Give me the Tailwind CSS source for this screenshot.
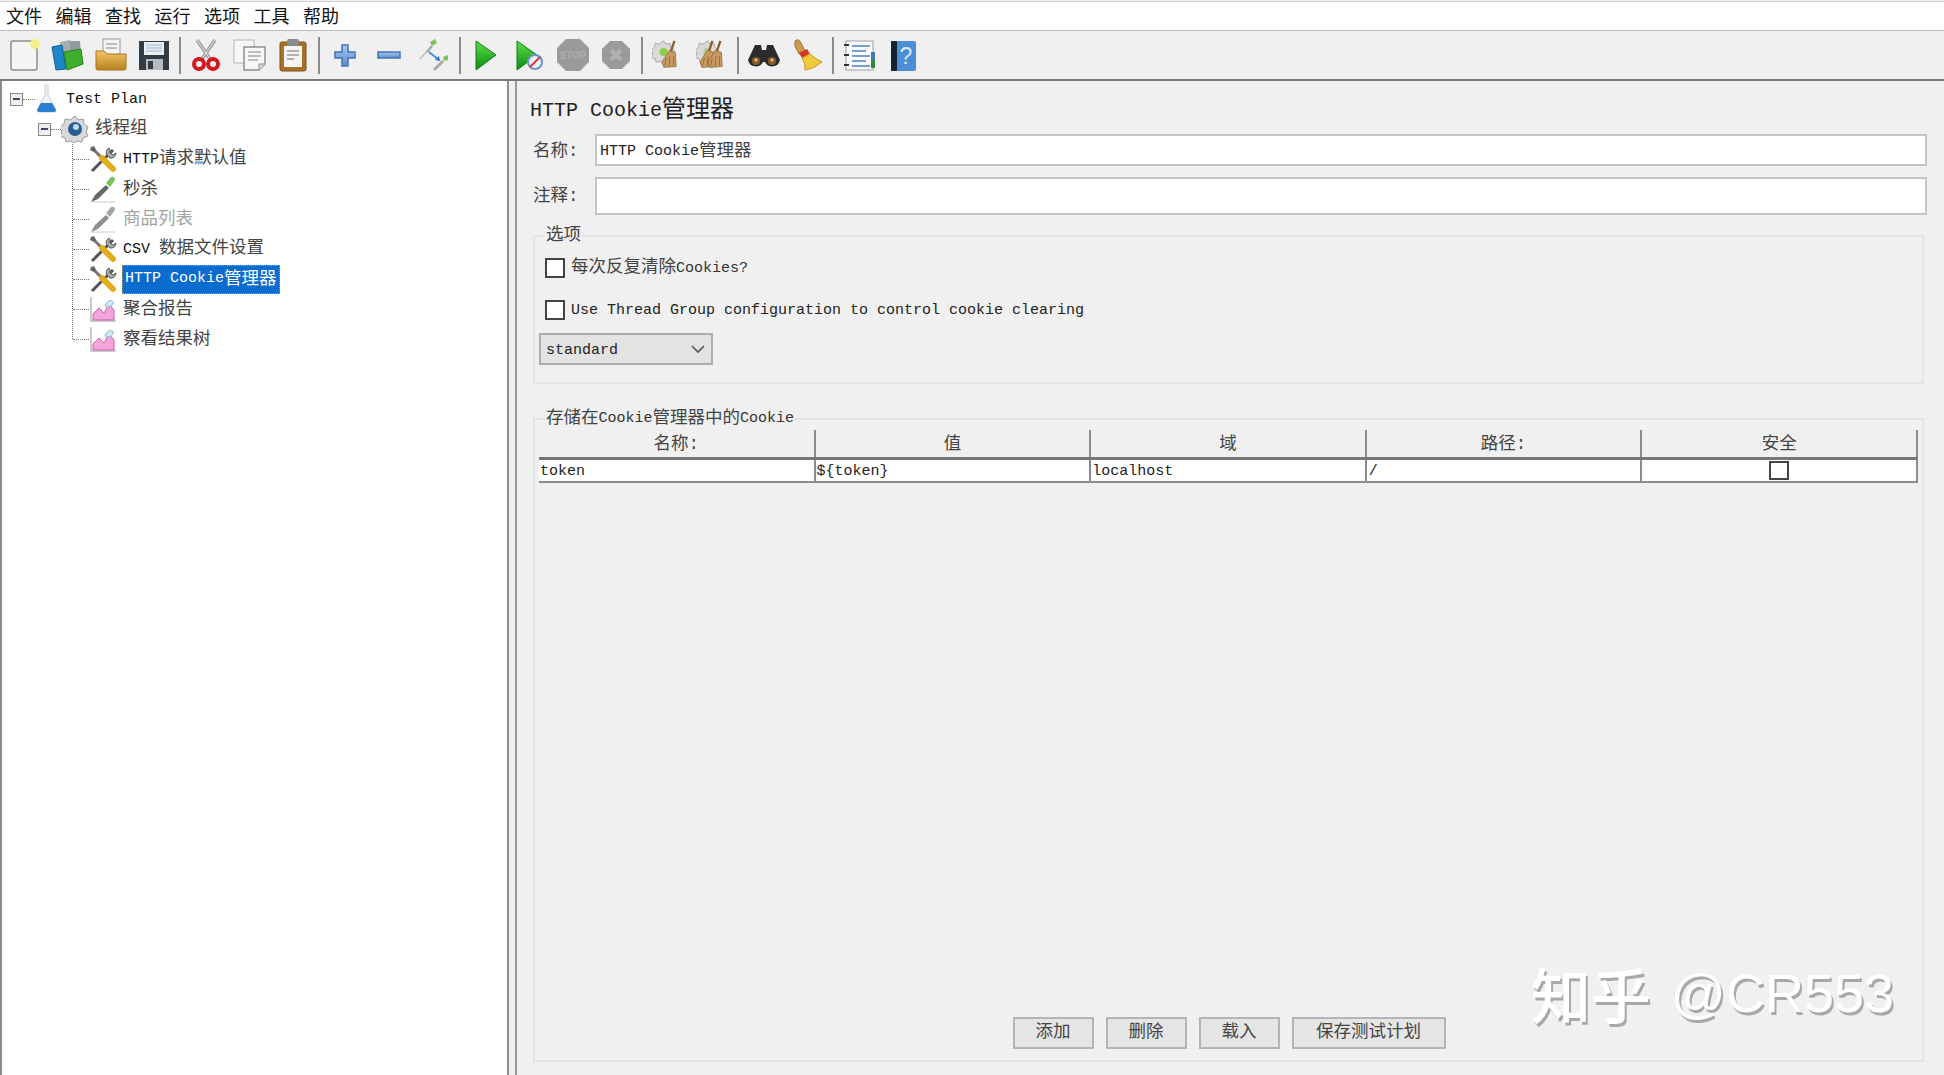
<!DOCTYPE html>
<html lang="zh-CN">
<head>
  <meta charset="UTF-8" />
  <title>Apache JMeter - HTTP Cookie管理器</title>
  <script src="https://cdn.jsdelivr.net/npm/@tailwindcss/browser@4"></script>
</head>
<body class="w-[1944px] h-[1075px] overflow-hidden flex flex-col bg-[#f0f0f0] text-[15px] text-[#222] [font-family:'Liberation_Mono','Noto_Sans_CJK_SC',monospace]">
  <!-- shared icons -->
  <svg class="absolute w-0 h-0">
    <defs>
      <linearGradient id="g-green" x1="0" y1="0" x2="0" y2="1"><stop offset="0" stop-color="#5fe04a"/><stop offset="1" stop-color="#0b8a12"/></linearGradient>
      <linearGradient id="g-folder" x1="0" y1="0" x2="0" y2="1"><stop offset="0" stop-color="#f2c766"/><stop offset="1" stop-color="#b97f1e"/></linearGradient>
      <linearGradient id="g-blue" x1="0" y1="0" x2="0" y2="1"><stop offset="0" stop-color="#a9c8ee"/><stop offset="1" stop-color="#5a8ccb"/></linearGradient>
    </defs>
    <symbol id="i-tools" viewBox="0 0 28 28">
      <path d="M3 26 L24 5" stroke="#555" stroke-width="3"/>
      <path d="M20 3 a5 5 0 0 0 -2 7 l3 3 a5 5 0 0 0 6 -5 l-3 2 -3 -2 0 -3z" fill="#aaa" stroke="#555"/>
      <path d="M4 4 L14 14" stroke="#777" stroke-width="3"/>
      <path d="M2 2 L5 1 L7 5 L5 7 L1 5z" fill="#666"/>
      <path d="M13 13 L24 24" stroke="#e3ac1c" stroke-width="6" stroke-linecap="round"/>
    </symbol>
    <symbol id="i-chart" viewBox="0 0 28 28">
      <path d="M2 2 V26 H27" fill="none" stroke="#bfb8bf" stroke-width="1.5"/>
      <path d="M4 25 V19 L10 13 L15 18 L20 9 L25 15 V25z" fill="#f3a4dc" stroke="#c964a8"/>
      <path d="M16 11 C18 5 23 4 24 7 C25 10 20 14 16 11z" fill="#cfe6f4" stroke="#8eb6d3"/>
    </symbol>
    <symbol id="i-broom" viewBox="0 0 34 34">
      <path d="M22 1 L18 13" stroke="#8a5a2b" stroke-width="2.5"/>
      <path d="M16 12 L23 14 L24 30 L10 31 L8 25z" fill="#c89b63" stroke="#96703e"/>
      <path d="M13 20 L11 29 M17 18 L16 30 M21 18 L21 29" stroke="#8f6a38"/>
    </symbol>
    <symbol id="i-gear" viewBox="0 0 28 28">
      <path d="M14 1 l3 4 5 -1 1 5 4 3 -2 5 2 4 -5 2 -1 4 -5 -1 -3 2 -3 -2 -5 1 -1 -4 -5 -2 2 -4 -2 -5 4 -3 1 -5 5 1z" fill="#d9d9d9" stroke="#9b9b9b"/>
    </symbol>
  </svg>

  <!-- menu bar -->
  <nav class="h-[30px] shrink-0 bg-white border-t border-t-[#d0d0d0] mt-px border-b border-b-[#bdbdbd] flex items-center gap-[13.5px] pl-[6px] pb-[3px] text-[18px] leading-none text-[#111] [font-family:'Noto_Sans_CJK_SC',sans-serif]">
    <span>文件</span><span>编辑</span><span>查找</span><span>运行</span><span>选项</span><span>工具</span><span>帮助</span>
  </nav>

  <!-- toolbar -->
  <div class="h-[50px] shrink-0 flex items-center pl-[2px] border-b-2 border-[#7a7a7a] bg-[#f0f0f0]">
    <svg class="w-[34px] h-[34px] mx-[4.75px]" viewBox="0 0 34 34"><rect x="4" y="3" width="26" height="29" rx="2" fill="#f4f4f2" stroke="#8d8d8d" stroke-width="1.5"/><circle cx="28" cy="6" r="5" fill="#f7ee8c"/><path d="M6 12v.1M6 20v.1M6 27v.1" stroke="#aaa" stroke-width="1.5"/></svg>
    <svg class="w-[34px] h-[34px] mx-[4.75px]" viewBox="0 0 34 34"><path d="M10 4 L20 2 L22 24 L12 26z" fill="#a6aeb0"/><path d="M20 3 L30 3 L31 22 L20 24z" fill="#8f9ba0"/><path d="M2 9 L12 7 L16 31 L6 32z" fill="#1e86c8" stroke="#0f5f94"/><path d="M14 14 L31 11 L33 26 L17 32z" fill="#3fae2c" stroke="#27801b"/></svg>
    <svg class="w-[34px] h-[34px] mx-[4.75px]" viewBox="0 0 34 34"><rect x="9" y="1" width="17" height="17" fill="#f4f4f4" stroke="#999"/><path d="M12 6h11M12 10h11" stroke="#aaa" stroke-width="1.5"/><path d="M2 13 H10 L13 16 H32 V30 Q32 32 30 32 H4 Q2 32 2 30z" fill="url(#g-folder)" stroke="#a9751f"/></svg>
    <svg class="w-[34px] h-[34px] mx-[4.75px]" viewBox="0 0 34 34"><path d="M2 3 H32 V32 H2z" fill="#333c42"/><rect x="7" y="4" width="20" height="13" fill="#e8eef4"/><path d="M9 7h16M9 10h16M9 13h16" stroke="#9db4cb"/><rect x="9" y="21" width="17" height="11" fill="#b9bcbf"/><rect x="11" y="23" width="5" height="8" fill="#333c42"/></svg>
    <div class="w-[2px] h-[37px] mx-[3.25px] bg-[#8c8c8c]"></div>
    <svg class="w-[34px] h-[34px] mx-[4.75px]" viewBox="0 0 34 34"><path d="M8 2 L21 21 M26 2 L13 21" stroke="#9d9d9d" stroke-width="3.5"/><path d="M8 2 L21 21 M26 2 L13 21" stroke="#e8e8e8" stroke-width="1"/><circle cx="10" cy="26" r="5" fill="none" stroke="#d3171b" stroke-width="4"/><circle cx="24" cy="26" r="5" fill="none" stroke="#d3171b" stroke-width="4"/></svg>
    <svg class="w-[34px] h-[34px] mx-[4.75px]" viewBox="0 0 34 34"><rect x="1" y="2" width="20" height="23" fill="#f6f6f6" stroke="#b5b5b5"/><path d="M11 9 H32 V26 L26 32 H11z" fill="#f6f6f6" stroke="#8f8f8f" stroke-width="1.5"/><path d="M15 14h13M15 18h13M15 22h10" stroke="#aaa" stroke-width="1.5"/><path d="M26 32 V26 H32" fill="#ddd" stroke="#8f8f8f"/></svg>
    <svg class="w-[34px] h-[34px] mx-[4.75px]" viewBox="0 0 34 34"><rect x="4" y="4" width="26" height="29" rx="2" fill="#a8712a" stroke="#7e5218"/><rect x="8" y="8" width="18" height="21" fill="#f5f5f3"/><path d="M11 13h12M11 17h12M11 21h7" stroke="#999" stroke-width="1.5"/><rect x="11" y="1" width="12" height="7" rx="2" fill="#8b8b8b"/></svg>
    <div class="w-[2px] h-[37px] mx-[3.25px] bg-[#8c8c8c]"></div>
    <svg class="w-[34px] h-[34px] mx-[4.75px]" viewBox="0 0 34 34"><path d="M14 7 H20 V14 H27 V20 H20 V28 H14 V20 H7 V14 H14z" fill="url(#g-blue)" stroke="#3f74b5" stroke-width="1.5"/></svg>
    <svg class="w-[34px] h-[34px] mx-[4.75px]" viewBox="0 0 34 34"><rect x="6" y="14" width="22" height="6" fill="url(#g-blue)" stroke="#3f74b5" stroke-width="1.5"/></svg>
    <svg class="w-[34px] h-[34px] mx-[4.75px]" viewBox="0 0 34 34"><path d="M16 9 L5 21" stroke="#bbb" stroke-width="1.5"/><path d="M15 4 L20 1 L22 5 L17 8z" fill="#7cc25a"/><path d="M17 8 L12 14" stroke="#aaa" stroke-width="2.5"/><path d="M14 14 L24 22" stroke="#4a90d9" stroke-width="2"/><path d="M25 23 L20 22 L24 18z" fill="#2f78cf"/><path d="M28 19 L33 17 L33 22 L29 23z" fill="#7cc25a"/><path d="M28 23 L19 32" stroke="#aaa" stroke-width="3"/></svg>
    <div class="w-[2px] h-[37px] ml-[4.75px] mr-[3.25px] bg-[#8c8c8c]"></div>
    <svg class="w-[34px] h-[34px] mx-[4.75px]" viewBox="0 0 34 34"><path d="M7 3 L27 17 L7 32z" fill="url(#g-green)" stroke="#0c7f14"/></svg>
    <svg class="w-[34px] h-[34px] mx-[4.75px]" viewBox="0 0 34 34"><path d="M5 3 L25 17 L5 32z" fill="url(#g-green)" stroke="#0c7f14"/><circle cx="23" cy="24" r="7" fill="#eef3fa" stroke="#6d94c9" stroke-width="2"/><path d="M18 29 L28 19" stroke="#d8343c" stroke-width="2"/></svg>
    <svg class="w-[34px] h-[34px] mx-[4.75px]" viewBox="0 0 34 34"><path d="M10 1 H24 L33 10 V24 L24 33 H10 L1 24 V10z" fill="#9a9a9a"/><text x="17" y="21" text-anchor="middle" font-size="10" font-weight="bold" fill="#adadad" font-family="Liberation Sans">STOP</text></svg>
    <svg class="w-[34px] h-[34px] mx-[4.75px]" viewBox="0 0 34 34"><path d="M11 3 H23 L31 11 V23 L23 31 H11 L3 23 V11z" fill="#9a9a9a"/><path d="M12 12 L22 22 M22 12 L12 22" stroke="#b1b1b1" stroke-width="4"/></svg>
    <div class="w-[2px] h-[37px] mx-[3.25px] bg-[#8c8c8c]"></div>
    <svg class="w-[34px] h-[34px] mx-[4.75px]" viewBox="0 0 34 34"><use href="#i-gear" x="1" y="2" width="23" height="23"/><circle cx="12.5" cy="14" r="4" fill="#8ccf4d"/><use href="#i-broom" x="4" y="0" width="30" height="34"/></svg>
    <svg class="w-[34px] h-[34px] mx-[4.75px]" viewBox="0 0 34 34"><use href="#i-gear" x="1" y="2" width="23" height="23"/><circle cx="12.5" cy="14" r="4" fill="#b8cf98"/><use href="#i-broom" x="-2" y="0" width="30" height="34"/><use href="#i-broom" x="6" y="0" width="30" height="34"/></svg>
    <div class="w-[2px] h-[37px] mx-[3.25px] bg-[#8c8c8c]"></div>
    <svg class="w-[34px] h-[34px] mx-[4.75px]" viewBox="0 0 34 34"><path d="M8 7 H14 L15 12 H19 L20 7 H26 L33 22 A8 8 0 0 1 18 24 H16 A8 8 0 0 1 1 22z" fill="#2c2c2c"/><circle cx="9" cy="23" r="4" fill="#8b5a25"/><circle cx="25" cy="23" r="4" fill="#8b5a25"/><circle cx="9" cy="22" r="1.5" fill="#e3c48f"/><circle cx="25" cy="22" r="1.5" fill="#e3c48f"/></svg>
    <svg class="w-[34px] h-[34px] mx-[4.75px]" viewBox="0 0 34 34"><path d="M5 3 Q9 0 11 5 L15 13 L9 16 L5 8z" fill="#cf9a4d" stroke="#9b6e2d"/><path d="M9 15 L17 11 L20 16 L12 20z" fill="#d8342a"/><path d="M12 20 L20 16 Q27 22 32 24 Q24 31 15 32 Q16 26 12 20z" fill="#f0c93a" stroke="#c89a1e"/></svg>
    <div class="w-[2px] h-[37px] mx-[3.25px] bg-[#8c8c8c]"></div>
    <svg class="w-[34px] h-[34px] mx-[4.75px]" viewBox="0 0 34 34"><rect x="4" y="3" width="27" height="29" fill="#fbfbfb" stroke="#9aa0a5"/><rect x="29" y="14" width="4" height="8" fill="#4178be"/><rect x="29" y="22" width="4" height="8" fill="#2f8b3a"/><path d="M2 7h5M2 17h5M2 27h5" stroke="#333" stroke-width="2"/><path d="M10 8h18M10 13h14M10 18h18M10 23h14M10 28h18" stroke="#4b83c4" stroke-width="1.5"/></svg>
    <svg class="w-[34px] h-[34px] mx-[4.75px]" viewBox="0 0 34 34"><rect x="5" y="3" width="25" height="30" rx="2" fill="#4c8ed3"/><rect x="5" y="3" width="6" height="30" rx="1" fill="#16222e"/><text x="20" y="26" text-anchor="middle" font-size="23" fill="#dbe9f7" font-family="Liberation Sans">?</text></svg>
  </div>

  <!-- main: tree + editor -->
  <main class="flex-1 min-h-0 flex">
    <aside class="w-[509px] shrink-0 bg-white border-l-2 border-r-2 border-[#8c8c8c] pt-[3px]">
      <div class="h-[30px] flex items-center">
        <span class="ml-[8px] w-[13px] h-[13px] border border-[#888] bg-[#eee] flex items-center justify-center"><span class="w-[7px] h-[1.5px] bg-[#446]"></span></span>
        <span class="w-[12px] border-t border-dotted border-[#777]"></span>
        <svg class="w-[24px] h-[30px]" viewBox="0 0 24 30"><path d="M10 1 H13 V11 L21 26 Q21 28 19 28 H4 Q2 28 2 26 L10 11z" fill="#eef3f7" stroke="#c5ced6"/><path d="M6 19 H17 L21 26 Q21 28 19 28 H4 Q2 28 2 26z" fill="#2d7fd6"/></svg>
        <span class="ml-[7px] pt-[3px] text-[#111]">Test Plan</span>
      </div>
      <div class="h-[30px] flex items-center pl-[36px]">
        <span class="w-[13px] h-[13px] border border-[#888] bg-[#eee] flex items-center justify-center"><span class="w-[7px] h-[1.5px] bg-[#446]"></span></span>
        <span class="w-[10px] border-t border-dotted border-[#777]"></span>
        <svg class="w-[28px] h-[28px]" viewBox="0 0 28 28"><use href="#i-gear"/><circle cx="14" cy="14" r="7" fill="#2a5c94"/><circle cx="15" cy="12" r="3" fill="#bcd7f0"/></svg>
        <span class="ml-[6px] text-[17.5px] leading-none text-[#444]">线程组</span>
      </div>
      <ul class="relative">
        <span class="absolute left-[70px] top-0 bottom-[15px] border-l border-dotted border-[#777]"></span>
        <li class="h-[30px] flex items-center pl-[71px]">
          <span class="w-[16px] border-t border-dotted border-[#777]"></span>
          <svg class="w-[28px] h-[28px]"><use href="#i-tools"/></svg>
          <span class="ml-[5px] px-px pt-[2px] text-[#111]">HTTP<span class="text-[17.5px] leading-none text-[#444]">请求默认值</span></span>
        </li>
        <li class="h-[30px] flex items-center pl-[71px]">
          <span class="w-[16px] border-t border-dotted border-[#777]"></span>
          <svg class="w-[28px] h-[28px]" viewBox="0 0 28 28"><path d="M2 27 L6 20 L17 10 L20 13 L9 24z" fill="#666"/><path d="M17 8 L22 2 Q26 1 26 5 L21 12z" fill="#7cc25a"/><path d="M2 27h24" stroke="#ccc"/></svg>
          <span class="ml-[6px] pt-[1px] text-[17.5px] leading-none text-[#444]">秒杀</span>
        </li>
        <li class="h-[30px] flex items-center pl-[71px]">
          <span class="w-[16px] border-t border-dotted border-[#777]"></span>
          <svg class="w-[28px] h-[28px]" viewBox="0 0 28 28"><path d="M2 27 L6 20 L17 10 L20 13 L9 24z" fill="#8f8f8f"/><path d="M17 8 L22 2 Q26 1 26 5 L21 12z" fill="#a5a5a5"/><path d="M2 27h24" stroke="#ccc"/></svg>
          <span class="ml-[6px] pt-[1px] text-[17.5px] leading-none text-[#a3a3a3]">商品列表</span>
        </li>
        <li class="h-[30px] flex items-center pl-[71px]">
          <span class="w-[16px] border-t border-dotted border-[#777]"></span>
          <svg class="w-[28px] h-[28px]"><use href="#i-tools"/></svg>
          <span class="ml-[5px] px-px pt-[2px] text-[#111]">CSV <span class="text-[17.5px] leading-none text-[#444]">数据文件设置</span></span>
        </li>
        <li class="h-[30px] flex items-center pl-[71px]">
          <span class="w-[16px] border-t border-dotted border-[#777]"></span>
          <svg class="w-[28px] h-[28px]"><use href="#i-tools"/></svg>
          <span class="ml-[5px] px-[2px] pt-[1px] h-[29px] flex items-center bg-[#0a6ccf] border border-dotted border-[#c79a4a] text-white whitespace-pre">HTTP Cookie<span class="text-[17.5px] leading-none">管理器</span></span>
        </li>
        <li class="h-[30px] flex items-center pl-[71px]">
          <span class="w-[16px] border-t border-dotted border-[#777]"></span>
          <svg class="w-[28px] h-[28px]"><use href="#i-chart"/></svg>
          <span class="ml-[6px] pt-[1px] text-[17.5px] leading-none text-[#444]">聚合报告</span>
        </li>
        <li class="h-[30px] flex items-center pl-[71px]">
          <span class="w-[16px] border-t border-dotted border-[#777]"></span>
          <svg class="w-[28px] h-[28px]"><use href="#i-chart"/></svg>
          <span class="ml-[6px] pt-[1px] text-[17.5px] leading-none text-[#444]">察看结果树</span>
        </li>
      </ul>
    </aside>

    <section class="relative flex-1 min-w-0 ml-[6px] border-l-2 border-[#9a9a9a] pl-[13px] pr-[17px] pt-[16px] pb-[13px] flex flex-col">
      <h1 class="h-[26px] pt-[2px] flex items-center text-[20px] font-normal text-[#222] whitespace-pre">HTTP Cookie<span class="text-[24px] leading-none">管理器</span></h1>
      <div class="flex items-center gap-[20px] mt-[11px] pl-[3px]">
        <label class="w-[42px] pt-[3px] whitespace-nowrap text-[17.5px] leading-none text-[#444]">名称:</label>
        <div class="flex-1 h-[32px] pt-[4px] bg-white border-2 border-[#c4c4c4] flex items-center pl-[3px] whitespace-pre">HTTP Cookie<span class="text-[17.5px] leading-none text-[#444]">管理器</span></div>
      </div>
      <div class="flex items-center gap-[20px] mt-[11px] pl-[3px]">
        <label class="w-[42px] pt-[2px] whitespace-nowrap text-[17.5px] leading-none text-[#444]">注释:</label>
        <div class="flex-1 h-[38px] bg-white border-2 border-[#c4c4c4]"></div>
      </div>

      <fieldset class="mt-[9px] ml-[3px] mr-[3px] border-2 border-[#e4e4e4] pl-[4px] pb-[17px]">
        <legend class="ml-[6px] px-[1px] h-[24px] flex items-center text-[17.5px] leading-none text-[#444]">选项</legend>
        <div class="h-[42px] flex items-center gap-[6px] pl-[6px]">
          <span class="w-[20px] h-[20px] -mt-[2px] bg-white border-2 border-[#444]"></span>
          <span class="text-[#333]"><span class="text-[17.5px] leading-none text-[#444]">每次反复清除</span>Cookies?</span>
        </div>
        <div class="h-[42px] flex items-center gap-[6px] pl-[6px]">
          <span class="w-[20px] h-[20px] -mt-[2px] bg-white border-2 border-[#444]"></span>
          <span class="text-[#222]">Use Thread Group configuration to control cookie clearing</span>
        </div>
        <div class="mt-[1px] w-[174px] h-[32px] bg-[#e3e3e3] border-2 border-[#adadad] flex items-center justify-between pl-[5px] pr-[6px]">
          <span class="pt-[4px]">standard</span>
          <svg class="w-[14px] h-[10px]" viewBox="0 0 14 10"><path d="M1 2 L7 8 L13 2" fill="none" stroke="#555" stroke-width="1.6"/></svg>
        </div>
      </fieldset>

      <fieldset class="mt-[23px] ml-[3px] mr-[3px] flex-1 min-h-0 flex flex-col border-2 border-[#e4e4e4] pl-[4px] pr-[4px] pb-[11px]">
        <legend class="ml-[6px] px-[1px] h-[24px] flex items-center text-[#333] whitespace-pre"><span class="text-[17.5px] leading-none text-[#444]">存储在</span>Cookie<span class="text-[17.5px] leading-none text-[#444]">管理器中的</span>Cookie</legend>
        <table class="-mt-[1px] w-full table-fixed border-collapse">
          <thead>
            <tr class="h-[28px] text-[17.5px] leading-none text-[#444] border-b-[3px] border-[#777]">
              <th class="font-normal border-r-2 border-[#8c8c8c] p-0 pt-[2px]">名称:</th>
              <th class="font-normal border-r-2 border-[#8c8c8c] p-0 pt-[2px]">值</th>
              <th class="font-normal border-r-2 border-[#8c8c8c] p-0 pt-[2px]">域</th>
              <th class="font-normal border-r-2 border-[#8c8c8c] p-0 pt-[2px]">路径:</th>
              <th class="font-normal border-r-2 border-[#8c8c8c] p-0 pt-[2px]">安全</th>
            </tr>
          </thead>
          <tbody>
            <tr class="h-[22px] leading-[18px] bg-white border-b-2 border-[#8c8c8c]">
              <td class="border-r-2 border-[#8c8c8c] p-0 pl-[1px] pt-[3px]">token</td>
              <td class="border-r-2 border-[#8c8c8c] p-0 pl-[1px] pt-[3px]">${token}</td>
              <td class="border-r-2 border-[#8c8c8c] p-0 pl-[1px] pt-[3px]">localhost</td>
              <td class="border-r-2 border-[#8c8c8c] p-0 pl-[2px] pt-[3px]">/</td>
              <td class="border-r-2 border-[#8c8c8c] p-0"><span class="block mx-auto w-[20px] h-[19px] border-2 border-[#444]"></span></td>
            </tr>
          </tbody>
        </table>
        <div class="mt-auto pl-[1px] flex justify-center gap-[12px] text-[17.5px] leading-none text-[#444]">
          <button class="w-[81px] h-[32px] bg-[#e5e5e5] border-2 border-[#b4b4b4]">添加</button>
          <button class="w-[81px] h-[32px] bg-[#e5e5e5] border-2 border-[#b4b4b4]">删除</button>
          <button class="w-[81px] h-[32px] bg-[#e5e5e5] border-2 border-[#b4b4b4]">载入</button>
          <button class="w-[154px] h-[32px] bg-[#e5e5e5] border-2 border-[#b4b4b4]">保存测试计划</button>
        </div>
      </fieldset>

      <!-- watermark -->
      <div class="absolute right-[50px] bottom-[52px] flex items-center gap-[20px] text-white [text-shadow:2px_3px_0_#a8a8a8]">
        <span class="text-[60px] font-medium leading-none [font-family:'Noto_Sans_CJK_SC',sans-serif]">知乎</span>
        <span class="text-[54px] leading-none [font-family:'Liberation_Sans',sans-serif]">@CR553</span>
      </div>
    </section>
  </main>
</body>
</html>
